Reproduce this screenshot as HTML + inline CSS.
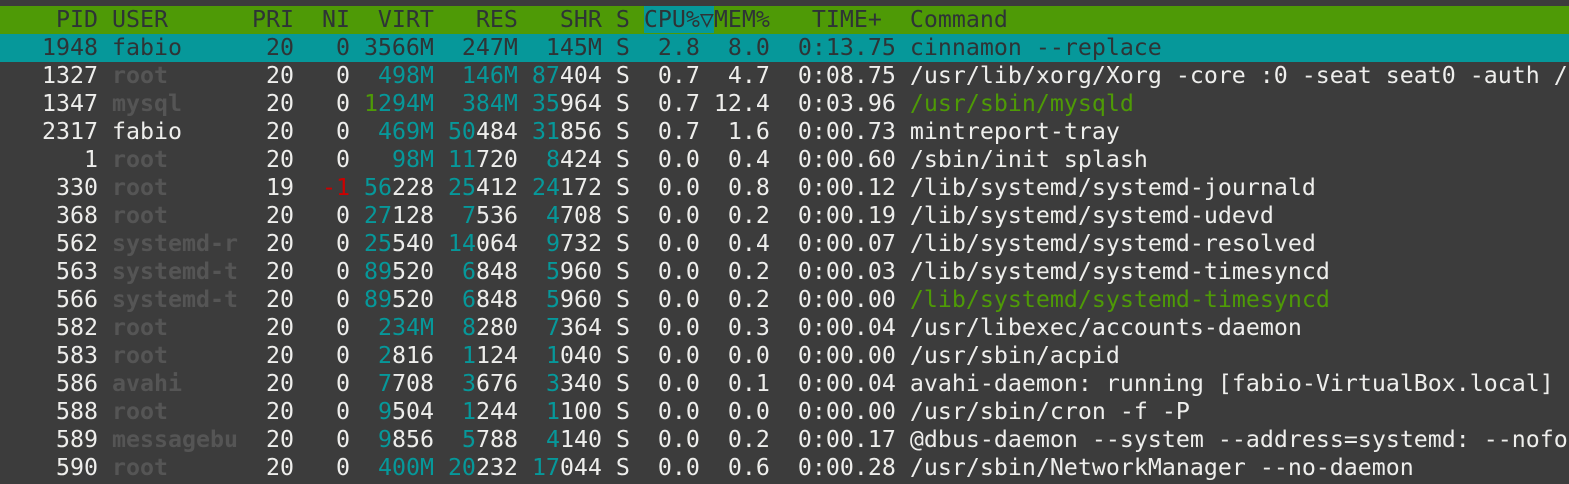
<!DOCTYPE html>
<html><head><meta charset="utf-8"><style>
html,body{margin:0;padding:0;background:#3c3c3c;width:1569px;height:484px;overflow:hidden}
pre{margin:0;padding-top:6px;font-family:"DejaVu Sans Mono","Liberation Mono",monospace;font-size:23.26px;line-height:28px;color:#eeeeec;white-space:pre}
.l{display:block;height:28px;width:1569px;overflow:hidden}
.h{background:#4e9a06;color:#2e3436}
.hc{background:#06989a}
.s{background:#06989a;color:#2e3436}
.g{color:#555555;font-weight:bold}.c{color:#06989a}.n{color:#4e9a06}.r{color:#cc0000}
</style></head><body><pre><span class="l h">    PID USER      PRI  NI  VIRT   RES   SHR S <span class="hc">CPU%▽</span>MEM%   TIME+  Command</span><span class="l s">   1948 fabio      20   0 3566M  247M  145M S  2.8  8.0  0:13.75 cinnamon --replace</span><span class="l">   1327 <span class="g">root     </span>  20   0 <span class="c"> 498M  146M 87</span>404 S  0.7  4.7  0:08.75 /usr/lib/xorg/Xorg -core :0 -seat seat0 -auth /</span><span class="l">   1347 <span class="g">mysql    </span>  20   0 <span class="n">1</span><span class="c">294M  384M 35</span>964 S  0.7 12.4  0:03.96 <span class="n">/usr/sbin/mysqld</span></span><span class="l">   2317 fabio      20   0 <span class="c"> 469M 50</span>484 <span class="c">31</span>856 S  0.7  1.6  0:00.73 mintreport-tray</span><span class="l">      1 <span class="g">root     </span>  20   0 <span class="c">  98M 11</span>720  <span class="c">8</span>424 S  0.0  0.4  0:00.60 /sbin/init splash</span><span class="l">    330 <span class="g">root     </span>  19  <span class="r">-1</span> <span class="c">56</span>228 <span class="c">25</span>412 <span class="c">24</span>172 S  0.0  0.8  0:00.12 /lib/systemd/systemd-journald</span><span class="l">    368 <span class="g">root     </span>  20   0 <span class="c">27</span>128  <span class="c">7</span>536  <span class="c">4</span>708 S  0.0  0.2  0:00.19 /lib/systemd/systemd-udevd</span><span class="l">    562 <span class="g">systemd-r</span>  20   0 <span class="c">25</span>540 <span class="c">14</span>064  <span class="c">9</span>732 S  0.0  0.4  0:00.07 /lib/systemd/systemd-resolved</span><span class="l">    563 <span class="g">systemd-t</span>  20   0 <span class="c">89</span>520  <span class="c">6</span>848  <span class="c">5</span>960 S  0.0  0.2  0:00.03 /lib/systemd/systemd-timesyncd</span><span class="l">    566 <span class="g">systemd-t</span>  20   0 <span class="c">89</span>520  <span class="c">6</span>848  <span class="c">5</span>960 S  0.0  0.2  0:00.00 <span class="n">/lib/systemd/systemd-timesyncd</span></span><span class="l">    582 <span class="g">root     </span>  20   0 <span class="c"> 234M</span>  <span class="c">8</span>280  <span class="c">7</span>364 S  0.0  0.3  0:00.04 /usr/libexec/accounts-daemon</span><span class="l">    583 <span class="g">root     </span>  20   0  <span class="c">2</span>816  <span class="c">1</span>124  <span class="c">1</span>040 S  0.0  0.0  0:00.00 /usr/sbin/acpid</span><span class="l">    586 <span class="g">avahi    </span>  20   0  <span class="c">7</span>708  <span class="c">3</span>676  <span class="c">3</span>340 S  0.0  0.1  0:00.04 avahi-daemon: running [fabio-VirtualBox.local]</span><span class="l">    588 <span class="g">root     </span>  20   0  <span class="c">9</span>504  <span class="c">1</span>244  <span class="c">1</span>100 S  0.0  0.0  0:00.00 /usr/sbin/cron -f -P</span><span class="l">    589 <span class="g">messagebu</span>  20   0  <span class="c">9</span>856  <span class="c">5</span>788  <span class="c">4</span>140 S  0.0  0.2  0:00.17 @dbus-daemon --system --address=systemd: --nofo</span><span class="l">    590 <span class="g">root     </span>  20   0 <span class="c"> 400M 20</span>232 <span class="c">17</span>044 S  0.0  0.6  0:00.28 /usr/sbin/NetworkManager --no-daemon</span></pre></body></html>
